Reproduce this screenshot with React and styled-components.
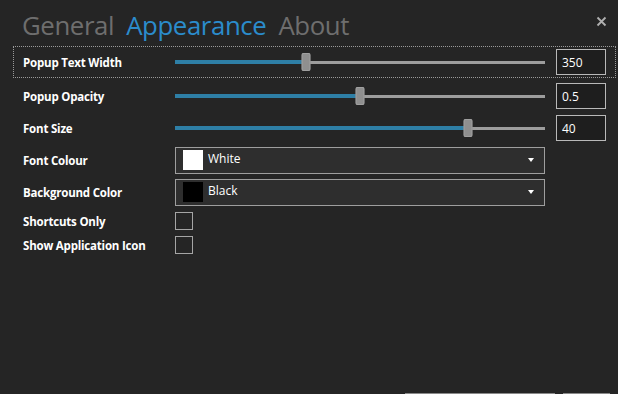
import React from 'react'
import styled, { createGlobalStyle } from 'styled-components'

const GlobalStyle = createGlobalStyle`
  html, body {
    margin: 0;
    padding: 0;
    background: #252525;
  }
  body {
    font-family: 'Open Sans', 'Noto Sans', sans-serif;
  }
`

const Window = styled.main`
  width: 618px;
  height: 394px;
  background-color: #252525;
  position: relative;
  overflow: hidden;
  display: flex;
  flex-direction: column;
  padding: 0 2px 0 13px;
  box-sizing: border-box;
`

const Tabs = styled.nav`
  display: flex;
  gap: 12px;
  height: 46px;
  padding-left: 9px;
  align-items: flex-start;
`

const Tab = styled.span`
  font-family: 'Open Sans', 'Noto Sans', sans-serif;
  font-weight: 400;
  font-size: 25.8px;
  line-height: 46px;
  margin-top: 2px;
  letter-spacing: -0.4px;
  color: ${(p) => (p.$active ? '#2b8ccc' : '#6e6e6e')};
`

const Close = styled.div`
  position: absolute;
  top: 10px;
  right: 11px;
  width: 11px;
  height: 11px;
`

const Form = styled.section`
  display: flex;
  flex-direction: column;
`

const Row = styled.div`
  display: grid;
  grid-template-columns: 141px 370px 50px;
  column-gap: 11px;
  align-items: center;
  height: ${(p) => p.$h || 32}px;
  margin-top: ${(p) => p.$mt || 0}px;
  padding: 0 9px;
  box-sizing: border-box;
  border: 1px dotted ${(p) => (p.$focused ? '#9a9a9a' : 'transparent')};
  width: 603px;
`

const Label = styled.label`
  font-family: 'Open Sans', 'Noto Sans', sans-serif;
  font-weight: 700;
  font-size: 11.5px;
  letter-spacing: -0.2px;
  color: #ffffff;
  white-space: nowrap;
`

const Slider = styled.div`
  position: relative;
  height: 18px;
  display: flex;
  align-items: center;
`

const Track = styled.div`
  width: 100%;
  height: 3px;
  background: #9d9d9d;
`

const Fill = styled.div`
  position: absolute;
  left: 0;
  top: 7px;
  height: 4px;
  background: #2e7fa6;
`

const Thumb = styled.div`
  position: absolute;
  top: 0;
  width: 9px;
  height: 18px;
  border-radius: 2px;
  background: #8f8f8f;
  box-shadow: inset 0 0 0 1px #a0a0a0;
  transform: translateX(-50%);
`

const NumberBox = styled.div`
  height: 26px;
  border: 1px solid #b9b9b9;
  background: #1e1e1e;
  box-sizing: border-box;
  color: #ffffff;
  font-size: 12px;
  display: flex;
  align-items: center;
  padding-left: 5px;
  font-family: 'Open Sans', 'Noto Sans', sans-serif;
`

const Select = styled.div`
  height: 27px;
  border: 1px solid #9e9e9e;
  background: #2e2e2e;
  box-sizing: border-box;
  display: flex;
  align-items: center;
  padding: 0 10px 0 7px;
  gap: 5px;
  color: #ffffff;
  font-size: 12px;
`

const Swatch = styled.span`
  width: 20px;
  height: 20px;
  background: ${(p) => p.$color};
`

const SelectText = styled.span`
  flex: 1;
  margin-top: -3px;
`

const Arrow = styled.span`
  width: 0;
  height: 0;
  border-left: 3.5px solid transparent;
  border-right: 3.5px solid transparent;
  border-top: 4px solid #ffffff;
`

const Checkbox = styled.div`
  width: 18px;
  height: 18px;
  border: 1px solid #a5a5a5;
  box-sizing: border-box;
  background: #252525;
`

const Footer = styled.div`
  position: absolute;
  bottom: -20px;
  right: 8px;
  display: flex;
  gap: 8px;
`

const Button = styled.div`
  width: ${(p) => p.$w}px;
  height: 21px;
  border: 1px solid #8a8a8a;
  box-sizing: border-box;
`

const sliders = [
  { label: 'Popup Text Width', value: '350', pos: 306, focused: true },
  { label: 'Popup Opacity', value: '0.5', pos: 360 },
  { label: 'Font Size', value: '40', pos: 468 },
]

function SliderRow({ label, value, pos, focused, mt }) {
  const px = pos - 175
  return (
    <Row $focused={focused} $mt={mt}>
      <Label>{label}</Label>
      <Slider>
        <Track />
        <Fill style={{ width: px }} />
        <Thumb style={{ left: px }} />
      </Slider>
      <NumberBox>{value}</NumberBox>
    </Row>
  )
}

export default function App() {
  return (
    <>
      <GlobalStyle />
      <Window>
        <Tabs>
          <Tab>General</Tab>
          <Tab $active>Appearance</Tab>
          <Tab>About</Tab>
        </Tabs>
        <Close>
          <svg width="11" height="11" viewBox="0 0 11 11">
            <path d="M1.5 1.5 L9.5 9.5 M9.5 1.5 L1.5 9.5" stroke="#b0b0b0" strokeWidth="1.8" />
          </svg>
        </Close>
        <Form>
          {sliders.map((s, i) => (
            <SliderRow key={i} {...s} mt={i === 1 ? 2 : 0} />
          ))}
          <Row>
            <Label>Font Colour</Label>
            <Select>
              <Swatch $color="#ffffff" />
              <SelectText>White</SelectText>
              <Arrow />
            </Select>
          </Row>
          <Row>
            <Label>Background Color</Label>
            <Select>
              <Swatch $color="#000000" />
              <SelectText>Black</SelectText>
              <Arrow />
            </Select>
          </Row>
          <Row $h={26}>
            <Label>Shortcuts Only</Label>
            <Checkbox />
          </Row>
          <Row $h={22}>
            <Label>Show Application Icon</Label>
            <Checkbox />
          </Row>
        </Form>
        <Footer>
          <Button $w={150} />
          <Button $w={47} />
        </Footer>
      </Window>
    </>
  )
}
